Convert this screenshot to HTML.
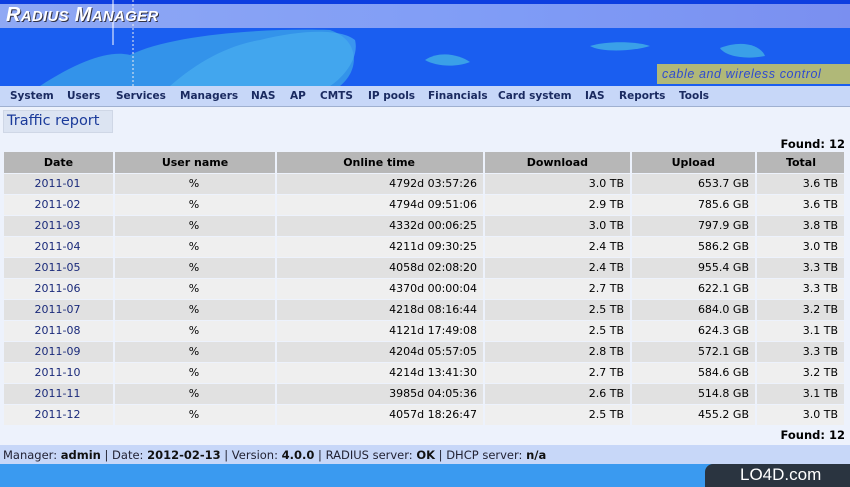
<!DOCTYPE html>
<html><head><style>
*{margin:0;padding:0;box-sizing:border-box}
body{width:850px;height:487px;overflow:hidden;background:#edf2fc;font-family:"DejaVu Sans","Liberation Sans",sans-serif;position:relative}
#hdr{position:absolute;left:0;top:0;width:850px;height:86px;background:#1a5ef0;overflow:hidden}
#hdr .top{position:absolute;left:0;top:0;width:850px;height:4px;background:#0d3ee0}
#hdr .band{position:absolute;left:0;top:4px;width:850px;height:24px;background:linear-gradient(90deg,#8fa8f4,#7f9cf6 60%,#7a8ff0)}
#title{position:absolute;left:6px;top:4px;color:#fff;font:italic bold 20px "Liberation Sans",sans-serif;letter-spacing:0.3px;text-shadow:1px 1px 0 #334}
#title small{font-size:15px}
#cw{position:absolute;left:657px;top:64px;width:193px;height:20px;background:#b0b878;color:#2f4bd0;font:italic 12.5px "Liberation Sans",sans-serif;padding:3px 0 0 5px;letter-spacing:0.6px}
#nav{position:absolute;left:0;top:86px;width:850px;height:21px;background:#c7d7f8;border-bottom:1px solid #9fb0d0;font-size:10.5px;font-weight:bold;color:#1a2a60}
#nav span{position:absolute;top:4px}
#tr{position:absolute;left:3px;top:110px;width:110px;height:23px;background:#dce4f2;border:1px solid #cfd7e6;color:#1a3a9a;font-size:14.5px;padding:2px 0 0 3px}
.found{position:absolute;right:5px;font-size:11.5px;font-weight:bold;color:#000}
table{position:absolute;left:4px;top:152px;width:842px;border-collapse:collapse;font-size:11px}
th{background:#b7b7b7;height:21px;font-weight:bold;border-right:2px solid #edf2fc;text-align:center}
td{height:21px;border-right:2px solid #edf2fc;border-top:1px solid #edf2fc;text-align:right;padding-right:2px}
th:nth-child(n+3),td:nth-child(n+3){text-align:right;padding-right:6px}
th:nth-child(3){padding-right:68px}
th:nth-child(4){padding-right:42px}
th:nth-child(5){padding-right:40px}
th:nth-child(6){padding-right:28px}
td:nth-child(1),td:nth-child(2){text-align:center}
td:nth-child(1){color:#1a2a7a}
tr.o td{background:#e1e1e1}tr.e td{background:#efefef}
#foot{position:absolute;left:0;top:445px;width:850px;height:19px;background:#c7d7f8;font-size:11.5px;color:#223;padding:3px 0 0 3px}
#foot b{color:#111}
#bot{position:absolute;left:0;top:464px;width:850px;height:23px;background:#3a9af0}
</style></head><body>
<div id="hdr"><div class="top"></div><div class="band"></div>
<svg width="850" height="86" style="position:absolute;left:0;top:0">
<path d="M40 86 C80 60 110 50 130 55 C170 35 260 28 330 30 C360 40 360 70 340 86Z" fill="#3aa0e8" opacity=".8"/>
<path d="M170 86 C200 60 230 45 260 40 C300 30 340 28 355 40 C360 60 340 80 330 86Z" fill="#48aef0" opacity=".7"/>
<path d="M425 60 C440 50 460 55 470 62 C455 68 435 66 425 60Z" fill="#3aa0e8"/>
<path d="M590 46 C610 40 640 42 650 46 C630 52 600 52 590 46Z" fill="#3aa0e8"/>
<path d="M720 48 C740 40 760 44 765 56 C745 60 725 56 720 48Z" fill="#3aa0e8"/>
<line x1="133" y1="0" x2="133" y2="86" stroke="#eee" stroke-dasharray="2,2"/>
<line x1="113" y1="0" x2="113" y2="45" stroke="#fff"/>
</svg>
<div id="title">R<small>ADIUS</small> M<small>ANAGER</small></div>
<div id="cw">cable and wireless control</div>
</div>
<div id="nav">
<span style="left:10px">System</span><span style="left:67px">Users</span><span style="left:116px">Services</span><span style="left:180px">Managers</span><span style="left:251px">NAS</span><span style="left:290px">AP</span><span style="left:320px">CMTS</span><span style="left:368px">IP pools</span><span style="left:428px">Financials</span><span style="left:498px">Card system</span><span style="left:585px">IAS</span><span style="left:619px">Reports</span><span style="left:679px">Tools</span>
</div>
<div id="tr">Traffic report</div>
<div class="found" style="top:137px">Found: 12</div>
<table>
<tr><th style="width:110px">Date</th><th style="width:162px">User name</th><th style="width:208px">Online time</th><th style="width:147px">Download</th><th style="width:125px">Upload</th><th>Total</th></tr>
<tr class="o"><td>2011-01</td><td>%</td><td>4792d 03:57:26</td><td>3.0 TB</td><td>653.7 GB</td><td>3.6 TB</td></tr>
<tr class="e"><td>2011-02</td><td>%</td><td>4794d 09:51:06</td><td>2.9 TB</td><td>785.6 GB</td><td>3.6 TB</td></tr>
<tr class="o"><td>2011-03</td><td>%</td><td>4332d 00:06:25</td><td>3.0 TB</td><td>797.9 GB</td><td>3.8 TB</td></tr>
<tr class="e"><td>2011-04</td><td>%</td><td>4211d 09:30:25</td><td>2.4 TB</td><td>586.2 GB</td><td>3.0 TB</td></tr>
<tr class="o"><td>2011-05</td><td>%</td><td>4058d 02:08:20</td><td>2.4 TB</td><td>955.4 GB</td><td>3.3 TB</td></tr>
<tr class="e"><td>2011-06</td><td>%</td><td>4370d 00:00:04</td><td>2.7 TB</td><td>622.1 GB</td><td>3.3 TB</td></tr>
<tr class="o"><td>2011-07</td><td>%</td><td>4218d 08:16:44</td><td>2.5 TB</td><td>684.0 GB</td><td>3.2 TB</td></tr>
<tr class="e"><td>2011-08</td><td>%</td><td>4121d 17:49:08</td><td>2.5 TB</td><td>624.3 GB</td><td>3.1 TB</td></tr>
<tr class="o"><td>2011-09</td><td>%</td><td>4204d 05:57:05</td><td>2.8 TB</td><td>572.1 GB</td><td>3.3 TB</td></tr>
<tr class="e"><td>2011-10</td><td>%</td><td>4214d 13:41:30</td><td>2.7 TB</td><td>584.6 GB</td><td>3.2 TB</td></tr>
<tr class="o"><td>2011-11</td><td>%</td><td>3985d 04:05:36</td><td>2.6 TB</td><td>514.8 GB</td><td>3.1 TB</td></tr>
<tr class="e"><td>2011-12</td><td>%</td><td>4057d 18:26:47</td><td>2.5 TB</td><td>455.2 GB</td><td>3.0 TB</td></tr>
</table>
<div class="found" style="top:428px">Found: 12</div>
<div id="foot">Manager: <b>admin</b> | Date: <b>2012-02-13</b> | Version: <b>4.0.0</b> | RADIUS server: <b>OK</b> | DHCP server: <b>n/a</b></div>
<div id="bot"><div style="position:absolute;left:705px;top:0;width:145px;height:23px;background:#2a3440;border-radius:8px 0 0 0;color:#fff;font:17px 'Liberation Sans',sans-serif;padding:1px 0 0 35px">LO4D.com</div></div>
</body></html>
